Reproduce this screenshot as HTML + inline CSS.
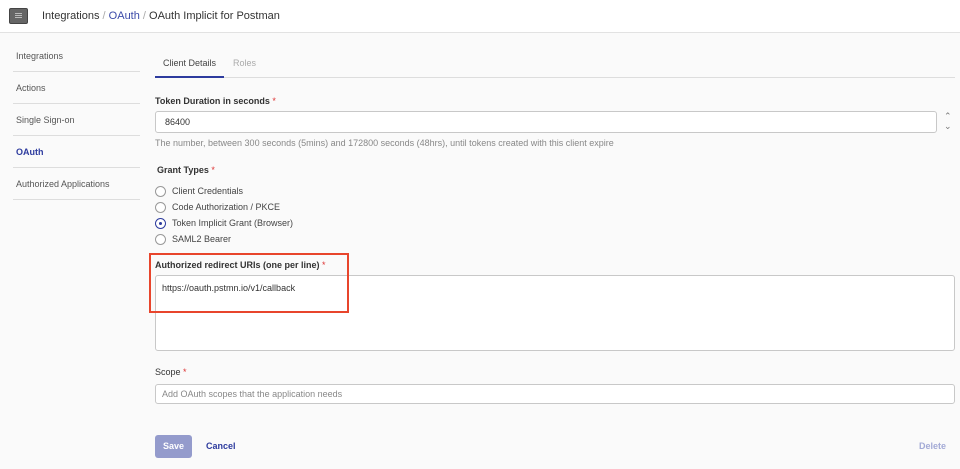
<!DOCTYPE html>
<html><head><style>
*{box-sizing:border-box;margin:0;padding:0}
body{width:960px;height:469px;background:#fafafa;font-family:"Liberation Sans",sans-serif;color:#333;position:relative;overflow:hidden}
.a{position:absolute;white-space:nowrap}
.hdr{position:absolute;left:0;top:0;width:960px;height:33px;background:#fff;border-bottom:1px solid #e2e2e2}
.side{font-size:9px;color:#555}
.dv{position:absolute;left:13px;width:127px;height:1px;background:#ddd}
.lbl{font-size:9px;font-weight:bold;color:#333}
.req{color:#d33;font-weight:normal}
.inp{position:absolute;background:#fff;border:1px solid #c8c8c8;border-radius:3px}
.rad{position:absolute;left:155px;width:11px;height:11px;border:1px solid #999;border-radius:50%;background:#fff}
.rt{font-size:9px;color:#444;left:172px}
</style></head><body>
<div class="hdr"></div>
<div class="a" style="left:9px;top:8px;width:19px;height:16px;background:#666;border-radius:2px;border:1px solid #444"></div>
<div class="a" style="left:15px;top:13px;width:7px;height:5px;border-top:1px solid #bbb;border-bottom:1px solid #bbb"></div>
<div class="a" style="left:15px;top:15px;width:7px;height:1px;background:#bbb"></div>
<div class="a" style="left:42px;top:10px;font-size:11px;color:#333">Integrations <span style="color:#aaa">/</span> <span style="color:#3b4aa8">OAuth</span> <span style="color:#aaa">/</span> OAuth Implicit for Postman</div>

<div class="a side" style="left:16px;top:51px">Integrations</div><div class="dv" style="top:71px"></div>
<div class="a side" style="left:16px;top:83px">Actions</div><div class="dv" style="top:103px"></div>
<div class="a side" style="left:16px;top:115px">Single Sign-on</div><div class="dv" style="top:135px"></div>
<div class="a side" style="left:16px;top:147px;color:#2d3b9e;font-weight:bold">OAuth</div><div class="dv" style="top:167px"></div>
<div class="a side" style="left:16px;top:179px">Authorized Applications</div><div class="dv" style="top:199px"></div>

<div class="a" style="left:163px;top:58px;font-size:9px;color:#444">Client Details</div>
<div class="a" style="left:233px;top:58px;font-size:9px;color:#aaa">Roles</div>
<div class="a" style="left:155px;top:77px;width:800px;height:1px;background:#ddd"></div>
<div class="a" style="left:155px;top:76px;width:69px;height:2px;background:#2d3b9e"></div>

<div class="a lbl" style="left:155px;top:96px">Token Duration in seconds <span class="req">*</span></div>
<div class="inp" style="left:155px;top:111px;width:782px;height:22px"></div>
<div class="a" style="left:165px;top:117px;font-size:9px;color:#333">86400</div>
<div class="a" style="left:944px;top:111px;font-size:9px;color:#777;line-height:10px">&#8963;<br>&#8964;</div>
<div class="a" style="left:155px;top:138px;font-size:9px;color:#888">The number, between 300 seconds (5mins) and 172800 seconds (48hrs), until tokens created with this client expire</div>

<div class="a lbl" style="left:157px;top:165px">Grant Types <span class="req">*</span></div>
<div class="rad" style="top:186px"></div><div class="a rt" style="top:186px">Client Credentials</div>
<div class="rad" style="top:202px"></div><div class="a rt" style="top:202px">Code Authorization / PKCE</div>
<div class="rad" style="top:218px;border-color:#2d3b9e"><div style="position:absolute;left:3px;top:3px;width:3px;height:3px;border-radius:50%;background:#2d3b9e"></div></div><div class="a rt" style="top:218px">Token Implicit Grant (Browser)</div>
<div class="rad" style="top:234px"></div><div class="a rt" style="top:234px">SAML2 Bearer</div>

<div class="a lbl" style="left:155px;top:260px">Authorized redirect URIs (one per line) <span class="req">*</span></div>
<div class="inp" style="left:155px;top:275px;width:800px;height:76px"></div>
<div class="a" style="left:162px;top:283px;font-size:9px;color:#333">https://oauth.pstmn.io/v1/callback</div>
<div class="a" style="left:149px;top:253px;width:200px;height:60px;border:2px solid #e8452c"></div>

<div class="a lbl" style="left:155px;top:367px;font-weight:normal">Scope <span class="req">*</span></div>
<div class="inp" style="left:155px;top:384px;width:800px;height:20px"></div>
<div class="a" style="left:162px;top:389px;font-size:9px;color:#888">Add OAuth scopes that the application needs</div>

<div class="a" style="left:155px;top:435px;width:37px;height:23px;background:#949bcc;border-radius:3px;color:#fff;font-size:9px;font-weight:bold;text-align:center;line-height:23px">Save</div>
<div class="a" style="left:206px;top:441px;font-size:9px;font-weight:bold;color:#2d3b9e">Cancel</div>
<div class="a" style="left:919px;top:441px;font-size:9px;font-weight:bold;color:#a3aad6">Delete</div>
</body></html>
